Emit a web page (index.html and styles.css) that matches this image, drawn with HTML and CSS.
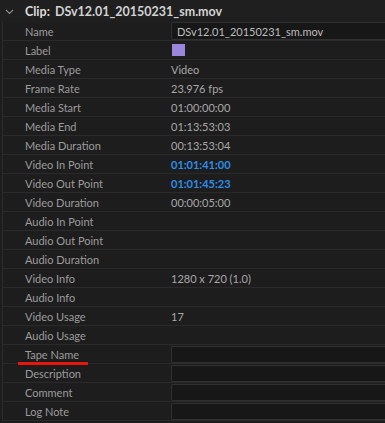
FILE: index.html
```html
<!DOCTYPE html>
<html>
<head>
<meta charset="utf-8">
<link rel="stylesheet" href="styles.css">
</head>
<body>
<div class="panel">
  <div class="header">
    <svg class="chev" width="9" height="6" viewBox="0 0 9 6"><path d="M1 1 L4.5 4.5 L8 1" fill="none" stroke="#8a8a8a" stroke-width="1.2"/></svg>
    <span class="clip">Clip:</span><span class="fname">DSv12.01_20150231_sm.mov</span>
  </div>
  <div class="rows">
    <div class="row"><div class="k">Name</div><div class="v"><div class="input">DSv12.01_20150231_sm.mov</div></div></div>
    <div class="row"><div class="k">Label</div><div class="v"><span class="swatch"></span></div></div>
    <div class="row"><div class="k">Media Type</div><div class="v">Video</div></div>
    <div class="row"><div class="k">Frame Rate</div><div class="v">23.976 fps</div></div>
    <div class="row"><div class="k">Media Start</div><div class="v">01:00:00:00</div></div>
    <div class="row"><div class="k">Media End</div><div class="v">01:13:53:03</div></div>
    <div class="row"><div class="k">Media Duration</div><div class="v">00:13:53:04</div></div>
    <div class="row"><div class="k">Video In Point</div><div class="v blue">01:01:41:00</div></div>
    <div class="row"><div class="k">Video Out Point</div><div class="v blue">01:01:45:23</div></div>
    <div class="row"><div class="k">Video Duration</div><div class="v">00:00:05:00</div></div>
    <div class="row"><div class="k">Audio In Point</div><div class="v"></div></div>
    <div class="row"><div class="k">Audio Out Point</div><div class="v"></div></div>
    <div class="row"><div class="k">Audio Duration</div><div class="v"></div></div>
    <div class="row"><div class="k">Video Info</div><div class="v">1280 x 720 (1.0)</div></div>
    <div class="row"><div class="k">Audio Info</div><div class="v"></div></div>
    <div class="row"><div class="k">Video Usage</div><div class="v">17</div></div>
    <div class="row"><div class="k">Audio Usage</div><div class="v"></div></div>
    <div class="row"><div class="k tape">Tape Name<span class="mark"></span></div><div class="v"><div class="input empty"></div></div></div>
    <div class="row"><div class="k">Description</div><div class="v"><div class="input empty"></div></div></div>
    <div class="row"><div class="k">Comment</div><div class="v"><div class="input empty"></div></div></div>
    <div class="row"><div class="k">Log Note</div><div class="v"><div class="input empty"></div></div></div>
  </div>
</div>
</body>
</html>
```
FILE: styles.css
```css
html, body {
  margin: 0;
  padding: 0;
  background: #1d1d1d;
  overflow: hidden;
}
body {
  font-family: "Lato", "Open Sans", sans-serif;
  font-size: 11px;
  color: #a0a0a0;
}
.panel {
  width: 385px;
  height: 423px;
}
.header {
  height: 22px;
  display: flex;
  align-items: center;
  background: #1f1f1f;
  font-size: 12.5px;
}
.chev {
  margin-left: 5px;
  margin-right: 11px;
  margin-top: 1px;
}
.clip {
  font-weight: bold;
  color: #dcdcdc;
  margin-right: 5px;
}
.fname {
  font-weight: bold;
  color: #d2d2d2;
}
.rows {
  margin-left: 2px;
  border-left: 1px solid #2c2c2c;
}
.row {
  display: flex;
  height: 18px;
  border-bottom: 1px solid #2a2a2a;
  align-items: center;
}
.k {
  width: 146px;
  padding-left: 22px;
  color: #9c9c9c;
  flex: none;
  position: relative;
  height: 18px;
  line-height: 19px;
}
.v {
  flex: 1;
  height: 18px;
  line-height: 19px;
  color: #a8a8a8;
  display: flex;
  align-items: center;
}
.blue {
  color: #2e8de8;
  font-weight: bold;
}
.swatch {
  display: block;
  width: 13px;
  height: 12px;
  background: #9b86dd;
  margin-left: 1px;
}
.input {
  box-sizing: border-box;
  height: 18px;
  width: 100%;
  background: #171717;
  border: 1px solid #303030;
  border-right: none;
  border-radius: 2px 0 0 2px;
  padding-left: 5px;
  line-height: 17px;
  color: #bdbdbd;
  font-size: 11px;
}
.input.empty {
  height: 17px;
}
.mark {
  position: absolute;
  left: 15px;
  top: 17px;
  width: 70px;
  height: 3px;
  background: #e8160d;
  z-index: 2;
}
```
